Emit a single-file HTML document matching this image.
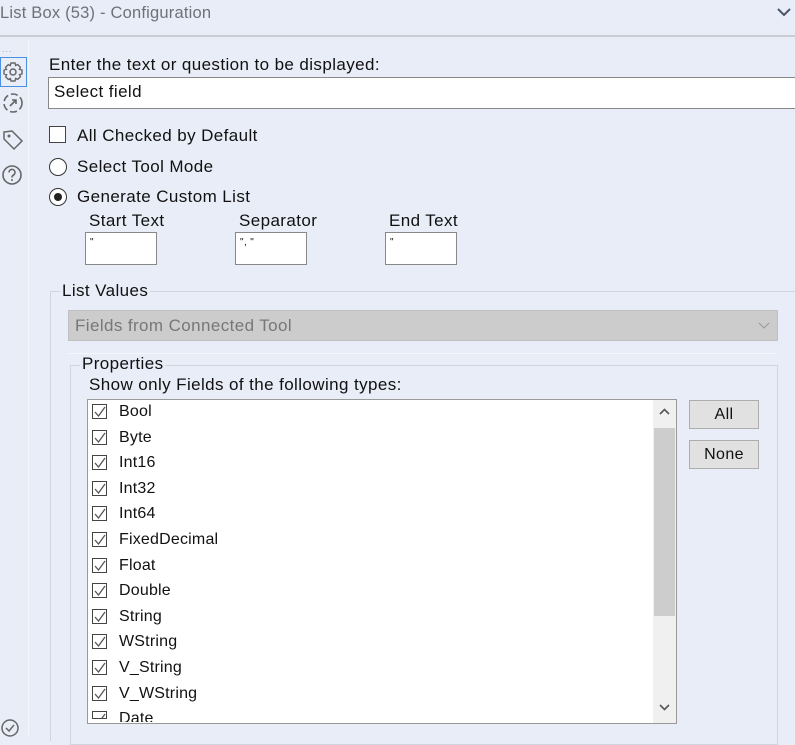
<!DOCTYPE html>
<html><head><style>
*{margin:0;padding:0;box-sizing:border-box}
body{width:795px;height:735px;background:#e9edf8;font-family:"Liberation Sans",sans-serif;font-size:17px;letter-spacing:0.4px;color:#111;position:relative;overflow:hidden}
.a{position:absolute;white-space:nowrap;line-height:18px}
.cb{position:absolute;width:17px;height:17px;border:1.5px solid #333;background:#fff}
.sm{position:absolute;width:15px;height:15px;border:1.3px solid #444;background:#fff}
.sm svg{position:absolute;left:1px;top:1px}
.box{position:absolute;background:#fff;border:1px solid #888}
.btn{position:absolute;background:#e1e1e1;border:1px solid #adadad;text-align:center;line-height:27px;font-size:16px}
</style></head><body>
<div class="a" style="left:0;top:4px;font-size:16.5px;letter-spacing:0.2px;color:#6e7178">List Box (53) - Configuration</div>
<svg class="a" style="left:777px;top:8px" width="14" height="9"><path d="M1 1 L7 7 L13 1" stroke="#4a5568" stroke-width="2" fill="none"/></svg>
<div class="a" style="left:0;top:35px;width:795px;height:2px;background:#c9ccd2"></div>
<div class="a" style="left:28px;top:40px;width:1px;height:695px;background:#f4f6fb"></div>
<div class="a" style="left:2px;top:40px;font-size:9px;color:#aaa;letter-spacing:1px">...</div>
<div class="a" style="left:0;top:57px;width:27px;height:30px;border:1px solid #4a90e2"></div>
<svg class="a" style="left:2px;top:61px" width="22" height="22" viewBox="0 0 22 22"><circle cx="11" cy="11" r="3" stroke="#666" stroke-width="1.5" fill="none"/><path d="M9 2h4l.6 2.5 2-1 2.8 2.8-1 2L20 9v4l-2.5.6 1 2-2.8 2.8-2-1L13 20H9l-.6-2.5-2 1-2.8-2.8 1-2L2 13V9l2.5-.6-1-2 2.8-2.8 2 1z" stroke="#666" stroke-width="1.4" fill="none"/></svg>
<svg class="a" style="left:2px;top:92px" width="22" height="22" viewBox="0 0 22 22"><circle cx="11" cy="11" r="9" stroke="#666" stroke-width="1.6" fill="none" stroke-dasharray="7 3"/><path d="M8 14 L14 8 M10 8h4v4" stroke="#666" stroke-width="1.6" fill="none"/></svg>
<svg class="a" style="left:2px;top:129px" width="22" height="22" viewBox="0 0 22 22"><path d="M2 3 L10 2 L20 12 L12 20 L2 10 Z" stroke="#666" stroke-width="1.5" fill="none"/><circle cx="7" cy="7" r="1.5" fill="#666"/></svg>
<svg class="a" style="left:1px;top:164px" width="22" height="22" viewBox="0 0 22 22"><circle cx="11" cy="11" r="9" stroke="#666" stroke-width="1.6" fill="none"/><path d="M8 8.5a3 3 0 1 1 4.5 2.5c-1 .6-1.5 1-1.5 2.5" stroke="#666" stroke-width="1.6" fill="none"/><circle cx="11" cy="16" r="1" fill="#666"/></svg>
<svg class="a" style="left:0;top:718px" width="20" height="20" viewBox="0 0 20 20"><circle cx="10" cy="10" r="8" stroke="#666" stroke-width="1.5" fill="none"/><path d="M6 10l3 3 5-6" stroke="#666" stroke-width="1.5" fill="none"/></svg>

<div class="a" style="left:49px;top:56px">Enter the text or question to be displayed:</div>
<div class="box" style="left:48px;top:77px;width:760px;height:32px;border-color:#888"></div>
<div class="a" style="left:54px;top:83px">Select field</div>

<div class="cb" style="left:49px;top:126px;border-color:#444"></div>
<div class="a" style="left:77px;top:127px">All Checked by Default</div>
<div class="a" style="left:49px;top:158px;width:18px;height:18px;border-radius:50%;border:1.3px solid #333;background:#fff"></div>
<div class="a" style="left:77px;top:158px">Select Tool Mode</div>
<div class="a" style="left:49px;top:188px;width:18px;height:18px;border-radius:50%;border:1.3px solid #333;background:#fff"></div>
<div class="a" style="left:54px;top:193px;width:8px;height:8px;border-radius:50%;background:#222"></div>
<div class="a" style="left:77px;top:188px">Generate Custom List</div>

<div class="a" style="left:89px;top:212px">Start Text</div>
<div class="a" style="left:239px;top:212px">Separator</div>
<div class="a" style="left:389px;top:212px">End Text</div>
<div class="box" style="left:85px;top:232px;width:72px;height:33px"></div>
<div class="box" style="left:235px;top:232px;width:72px;height:33px"></div>
<div class="box" style="left:385px;top:232px;width:72px;height:33px"></div>
<div class="a" style="left:90px;top:234px;font-size:10px">"</div>
<div class="a" style="left:240px;top:234px;font-size:10px">", "</div>
<div class="a" style="left:390px;top:234px;font-size:10px">"</div>

<div class="a" style="left:50px;top:291px;width:745px;height:450px;border-left:1px solid #d0d4dc;border-top:1px solid #d0d4dc"></div>
<div class="a" style="left:60px;top:282px;background:#e9edf8;padding:0 2px">List Values</div>
<div class="a" style="left:68px;top:310px;width:710px;height:31px;background:#cccccc;border:1px solid #c0c0c0"></div>
<div class="a" style="left:75px;top:317px;color:#777">Fields from Connected Tool</div>
<svg class="a" style="left:758px;top:322px" width="12" height="8"><path d="M1 1L6 6 11 1" stroke="#999" fill="none"/></svg>
<div class="a" style="left:68px;top:353px;width:707px;height:1px;background:#f5f7fc"></div>
<div class="a" style="left:70px;top:365px;width:708px;height:380px;border:1px solid #d0d4dc"></div>
<div class="a" style="left:80px;top:355px;background:#e9edf8;padding:0 2px">Properties</div>
<div class="a" style="left:89px;top:376px">Show only Fields of the following types:</div>

<div class="box" style="left:87px;top:399px;width:590px;height:325px;border-color:#999;overflow:hidden">
<div class="a" style="left:565px;top:0;width:24px;height:324px;background:#f0f0f0"></div>
<div class="a" style="left:566px;top:28px;width:21px;height:188px;background:#cdcdcd"></div>
<svg class="a" style="left:571px;top:8px" width="11" height="7"><path d="M1 6L5.5 1.5 10 6" stroke="#555" stroke-width="1.6" fill="none"/></svg>
<svg class="a" style="left:571px;top:304px" width="11" height="7"><path d="M1 1L5.5 5.5 10 1" stroke="#555" stroke-width="1.6" fill="none"/></svg>
</div>
<div id="L"></div>
<div class="btn" style="left:689px;top:400px;width:70px;height:29px">All</div>
<div class="btn" style="left:689px;top:440px;width:70px;height:29px">None</div>
<script>
var n=["Bool","Byte","Int16","Int32","Int64","FixedDecimal","Float","Double","String","WString","V_String","V_WString","Date"],h="";
n.forEach(function(t,i){var y=404+i*25.6;var ch=i==12?"height:8px;overflow:hidden;":"";
h+='<div class="sm" style="left:92px;top:'+y+'px;'+ch+'"><svg width="12" height="11"><path d="M1 6l3.5 4L11 1" stroke="#555" stroke-width="1.3" fill="none"/></svg></div>';
h+='<div class="a" style="left:119px;top:'+(y-1)+'px;font-size:16px;letter-spacing:0.2px;'+(i==12?'height:12px;overflow:hidden;':'')+'">'+t+'</div>';});
document.getElementById("L").innerHTML=h;
</script>
</body></html>
